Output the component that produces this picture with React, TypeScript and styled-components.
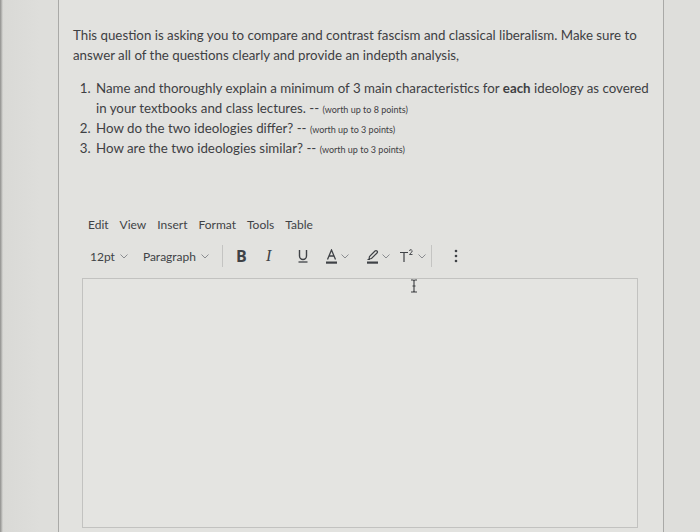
import React from "react";
import styled, { createGlobalStyle } from "styled-components";

const GlobalStyle = createGlobalStyle`
  html, body {
    margin: 0;
    padding: 0;
    background: #dfdfdc;
  }
  body {
    font-family: Lato, "Open Sans", "Liberation Sans", sans-serif;
    color: #3e4043;
  }
`;

const Page = styled.div`
  width: 700px;
  height: 532px;
  display: flex;
  overflow: hidden;
  background: linear-gradient(90deg, #8e8e8c 0, #d9d9d6 3px, #dededb 40px);
`;

const Gutter = styled.div<{ $w: number }>`
  width: ${(p) => p.$w}px;
  flex-shrink: 0;
`;

const Panel = styled.main`
  flex: 1;
  border-left: 1px solid #a9a9a7;
  border-right: 1px solid #a9a9a7;
  background: #e2e2df;
  padding: 25px 0 0 14px;
  display: flex;
  flex-direction: column;
`;

const Question = styled.p`
  margin: 0;
  font-size: 13.3px;
  line-height: 20px;
  width: 575px;
`;

const List = styled.ol`
  margin: 13px 0 0;
  padding-left: 21px;
  font-size: 13.3px;
  line-height: 20px;
  width: 562px;
  li {
    padding-left: 2px;
  }
  b {
    font-weight: 700;
  }
`;

const Worth = styled.span`
  font-size: 9px;
  line-height: 0;
`;

const Editor = styled.section`
  margin: 59px 0 0 9px;
  width: 556px;
  display: flex;
  flex-direction: column;
`;

const MenuBar = styled.nav`
  display: flex;
  gap: 11px;
  padding-left: 6px;
  font-size: 12px;
  line-height: 16px;
  color: #3f4246;
`;

const Toolbar = styled.div`
  display: flex;
  align-items: center;
  height: 26px;
  margin-top: 10px;
  padding-left: 8px;
  font-size: 12px;
  color: #3f4246;
`;

const Drop = styled.span<{ $gap?: number }>`
  display: inline-flex;
  align-items: center;
  gap: 5px;
  margin-right: ${(p) => p.$gap ?? 0}px;
`;

const Sep = styled.span<{ $l: number; $r: number }>`
  width: 1px;
  height: 22px;
  background: #c4c4c2;
  margin: 0 ${(p) => p.$r}px 0 ${(p) => p.$l}px;
`;

const Btn = styled.span<{ $w: number }>`
  width: ${(p) => p.$w}px;
  display: inline-flex;
  align-items: center;
  justify-content: flex-start;
  gap: 3px;
  color: #3f4246;
`;

const Bold = styled.span`
  font-family: "Open Sans", "Liberation Sans", sans-serif;
  font-size: 16px;
  font-weight: 700;
`;

const Italic = styled.span`
  font-family: "Liberation Serif", serif;
  font-style: italic;
  font-size: 16px;
`;

const Box = styled.div`
  position: relative;
  margin-top: 9px;
  height: 248px;
  border: 1px solid #c2c2c0;
  background: #e4e4e1;
`;

const Cursor = styled.svg`
  position: absolute;
  left: 326px;
  top: 0px;
`;

const Chevron = () => (
  <svg width="8" height="5" viewBox="0 0 8 5" fill="none">
    <path d="M0.5 0.5 L4 4 L7.5 0.5" stroke="#8a8c90" strokeWidth="1" />
  </svg>
);

const Underline = () => (
  <svg width="12" height="14" viewBox="0 0 12 14" fill="none">
    <path d="M2.5 1 V7 a3.5 3.5 0 0 0 7 0 V1" stroke="#3f4246" strokeWidth="1.4" />
    <path d="M1.5 13 H10.5" stroke="#3f4246" strokeWidth="1.3" />
  </svg>
);

const TextColor = () => (
  <svg width="13" height="15" viewBox="0 0 13 15" fill="none">
    <path d="M2.5 10.5 L6.5 1 L10.5 10.5 M4 7 H9" stroke="#3f4246" strokeWidth="1.3" />
    <rect x="1" y="12.5" width="11" height="2.2" fill="#3f4246" />
  </svg>
);

const Highlight = () => (
  <svg width="13" height="15" viewBox="0 0 13 15" fill="none">
    <path d="M3 10 L3.5 7.5 L9 2 a1.2 1.2 0 0 1 2 2 L5.5 9.5 Z" stroke="#3f4246" strokeWidth="1.2" />
    <path d="M1.5 10.5 H4" stroke="#3f4246" strokeWidth="1" />
    <rect x="1" y="12.5" width="11" height="2.2" fill="#3f4246" />
  </svg>
);

const Super = () => (
  <svg width="16" height="14" viewBox="0 0 16 14" fill="none">
    <path d="M1 3.5 H9 M5 3.5 V13" stroke="#3f4246" strokeWidth="1.2" />
    <path d="M10.5 2 a1.3 1.3 0 1 1 2.2 1 L10.5 5.5 H13.5" stroke="#3f4246" strokeWidth="0.9" />
  </svg>
);

const More = () => (
  <svg width="4" height="14" viewBox="0 0 4 14">
    <circle cx="2" cy="2" r="1.3" fill="#3f4246" />
    <circle cx="2" cy="7" r="1.3" fill="#3f4246" />
    <circle cx="2" cy="12" r="1.3" fill="#3f4246" />
  </svg>
);

export default function App() {
  return (
    <>
      <GlobalStyle />
      <Page>
        <Gutter $w={58} />
        <Panel>
          <Question>
            This question is asking you to compare and contrast fascism and classical liberalism. Make
            sure to answer all of the questions clearly and provide an indepth analysis,
          </Question>
          <List>
            <li>
              Name and thoroughly explain a minimum of 3 main characteristics for <b>each</b> ideology as
              covered in your textbooks and class lectures. -- <Worth>(worth up to 8 points)</Worth>
            </li>
            <li>
              How do the two ideologies differ? -- <Worth>(worth up to 3 points)</Worth>
            </li>
            <li>
              How are the two ideologies similar? -- <Worth>(worth up to 3 points)</Worth>
            </li>
          </List>
          <Editor>
            <MenuBar>
              <span>Edit</span>
              <span>View</span>
              <span>Insert</span>
              <span>Format</span>
              <span>Tools</span>
              <span>Table</span>
            </MenuBar>
            <Toolbar>
              <Drop $gap={15}>
                12pt <Chevron />
              </Drop>
              <Drop>
                Paragraph <Chevron />
              </Drop>
              <Sep $l={13} $r={13} />
              <Btn $w={30}>
                <Bold>B</Bold>
              </Btn>
              <Btn $w={31}>
                <Italic>I</Italic>
              </Btn>
              <Btn $w={28}>
                <Underline />
              </Btn>
              <Btn $w={41}>
                <TextColor />
                <Chevron />
              </Btn>
              <Btn $w={33}>
                <Highlight />
                <Chevron />
              </Btn>
              <Btn $w={28}>
                <Super />
                <Chevron />
              </Btn>
              <Sep $l={4} $r={22} />
              <Btn $w={10}>
                <More />
              </Btn>
            </Toolbar>
            <Box>
              <Cursor width="10" height="14" viewBox="0 0 10 14" fill="none">
                <path d="M2 1 H4 Q5 1 5 2.5 V11.5 Q5 13 6 13 H8 M8 1 H6 Q5 1 5 2.5 M5 11.5 Q5 13 4 13 H2 M3.5 7 H6.5" stroke="#3b3d40" strokeWidth="1.1" />
              </Cursor>
            </Box>
          </Editor>
        </Panel>
        <Gutter $w={36} />
      </Page>
    </>
  );
}
